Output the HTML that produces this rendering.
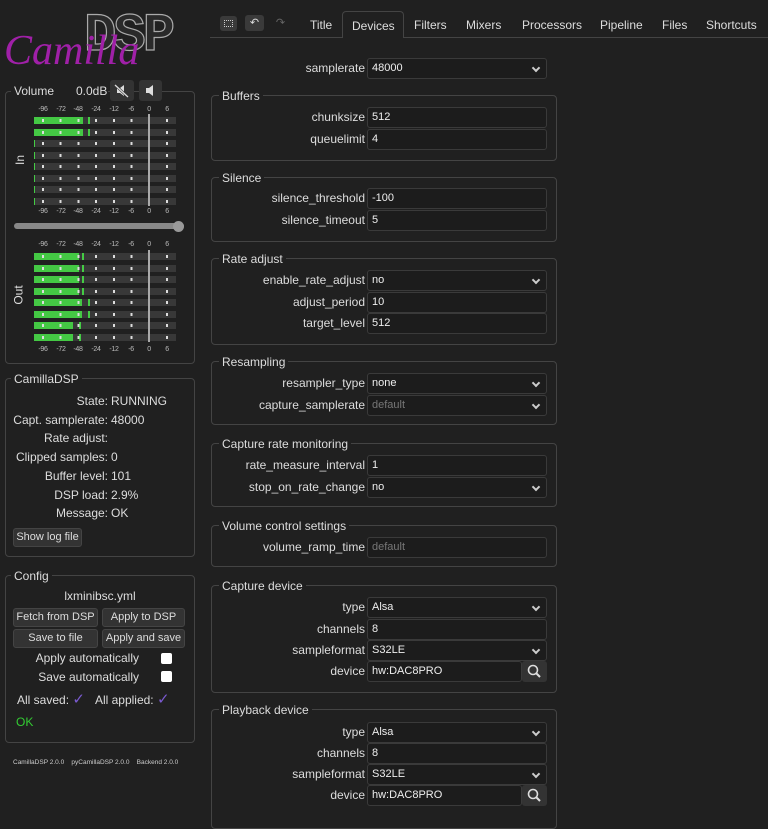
<!DOCTYPE html>
<html><head><meta charset="utf-8"><style>
*{box-sizing:border-box;margin:0;padding:0}
body{width:768px;height:812px;background:#202020;color:#ddd;font-family:"Liberation Sans",sans-serif;font-size:12px;position:relative;overflow:hidden}
.a{position:absolute}
.fs{position:absolute;border:1px solid #444;border-radius:4px}
.lg{position:absolute;background:#202020;padding:0 3px;color:#ddd;font-size:12px;line-height:14px}
.row{position:absolute;left:0;width:346px;height:21px}
.lbl{position:absolute;right:192px;top:3px;text-align:right;white-space:nowrap}
.inp{position:absolute;left:156px;width:180px;height:21px;border:1px solid #3a3a3a;border-radius:3px;background:#1c1c1c;padding:3px 4px;font-size:11px;color:#eee}
.sel::after{content:"";position:absolute;right:7px;top:6px;width:4px;height:4px;border-right:2px solid #ccc;border-bottom:2px solid #ccc;transform:rotate(45deg)}
.dis{color:#777}
.srch{position:absolute;left:311px;width:25px;height:21px;background:#333;border-radius:3px}
.tab{position:absolute;top:18px;font-size:12px;color:#ddd}
.mr{position:absolute;left:34px;width:142px;height:7px;background-size:100% 3px,100% 100%,100% 100%;background-position:0 2px,0 0,0 0;background-repeat:repeat-x,no-repeat,no-repeat}
.sl{position:absolute;width:20px;margin-left:-10px;text-align:center;font-size:7px;color:#bbb;letter-spacing:-0.3px}
.btn{position:absolute;background:#333;border:1px solid #444;border-radius:3px;font-size:11px;text-align:center;line-height:17px;color:#ddd}
.cb{position:absolute;width:11px;height:11px;background:#fff;border-radius:2px}
</style></head><body>

<!-- logo -->
<svg class="a" style="left:0;top:0" width="200" height="80">
<g fill="#2a2a2a" stroke="#aaa" stroke-width="1.2">
<text x="84" y="50" font-family="Liberation Mono" font-weight="bold" font-size="54" letter-spacing="-3">DSP</text>
</g>
<text x="4" y="64" font-family="Liberation Serif" font-style="italic" font-size="42" fill="#a020a8">Camilla</text>
</svg>

<!-- Volume -->
<div class="fs" style="left:5px;top:91px;width:190px;height:273px"></div>
<div class="lg" style="left:11px;top:84px;width:97px">Volume<span style="position:absolute;left:65px">0.0dB</span></div>
<div class="a" style="left:110px;top:80px;width:24px;height:21px;background:#333;border-radius:3px">
<svg width="24" height="21"><path d="M7 8h3l4-3v11l-4-3H7z" fill="#ddd"/><line x1="5" y1="5" x2="18" y2="17" stroke="#333" stroke-width="2.5"/><line x1="5" y1="5" x2="18" y2="17" stroke="#ddd" stroke-width="1.3"/></svg></div>
<div class="a" style="left:139px;top:80px;width:23px;height:21px;background:#333;border-radius:3px">
<svg width="23" height="21"><path d="M7 8h3l4-3v11l-4-3H7z" fill="#ddd"/></svg></div>

<div id="scales"></div>
<div class="a" style="left:15px;top:153px;transform:rotate(-90deg);font-size:12px">In</div>
<div class="a" style="left:14px;top:223px;width:170px;height:6px;background:#888;border-radius:3px"></div>
<div class="a" style="left:173px;top:221px;width:11px;height:11px;background:#999;border-radius:50%"></div>
<div class="a" style="left:9px;top:288px;transform:rotate(-90deg);font-size:12px">Out</div>

<!-- scale labels -->
<div class="a" style="left:0;top:106px">
<div class="sl" style="left:43px">-96</div><div class="sl" style="left:61px">-72</div><div class="sl" style="left:78px">-48</div><div class="sl" style="left:96px">-24</div><div class="sl" style="left:114px">-12</div><div class="sl" style="left:131px">-6</div><div class="sl" style="left:149px">0</div><div class="sl" style="left:167px">6</div></div>
<div class="a" style="left:0;top:208px">
<div class="sl" style="left:43px">-96</div><div class="sl" style="left:61px">-72</div><div class="sl" style="left:78px">-48</div><div class="sl" style="left:96px">-24</div><div class="sl" style="left:114px">-12</div><div class="sl" style="left:131px">-6</div><div class="sl" style="left:149px">0</div><div class="sl" style="left:167px">6</div></div>
<div class="a" style="left:0;top:241px">
<div class="sl" style="left:43px">-96</div><div class="sl" style="left:61px">-72</div><div class="sl" style="left:78px">-48</div><div class="sl" style="left:96px">-24</div><div class="sl" style="left:114px">-12</div><div class="sl" style="left:131px">-6</div><div class="sl" style="left:149px">0</div><div class="sl" style="left:167px">6</div></div>
<div class="a" style="left:0;top:346px">
<div class="sl" style="left:43px">-96</div><div class="sl" style="left:61px">-72</div><div class="sl" style="left:78px">-48</div><div class="sl" style="left:96px">-24</div><div class="sl" style="left:114px">-12</div><div class="sl" style="left:131px">-6</div><div class="sl" style="left:149px">0</div><div class="sl" style="left:167px">6</div></div>

<!-- meter rows -->
<div class="mr" style="top:117px;background-image:repeating-linear-gradient(to right,transparent 0 8px,#ddd 8px 10px,transparent 10px 17.7px),linear-gradient(to right,transparent 54px,#4c4 54px 56px,transparent 56px),linear-gradient(to right,#44c844 49px,#383838 49px)"></div>
<div class="mr" style="top:128.5px;background-image:repeating-linear-gradient(to right,transparent 0 8px,#ddd 8px 10px,transparent 10px 17.7px),linear-gradient(to right,transparent 54px,#4c4 54px 56px,transparent 56px),linear-gradient(to right,#44c844 49px,#383838 49px)"></div>
<div class="mr" style="top:140px;background-image:repeating-linear-gradient(to right,transparent 0 8px,#ddd 8px 10px,transparent 10px 17.7px),linear-gradient(to right,#4c4 1px,transparent 1px),linear-gradient(#383838,#383838)"></div>
<div class="mr" style="top:151.5px;background-image:repeating-linear-gradient(to right,transparent 0 8px,#ddd 8px 10px,transparent 10px 17.7px),linear-gradient(to right,#4c4 1px,transparent 1px),linear-gradient(#383838,#383838)"></div>
<div class="mr" style="top:163px;background-image:repeating-linear-gradient(to right,transparent 0 8px,#ddd 8px 10px,transparent 10px 17.7px),linear-gradient(to right,#4c4 1px,transparent 1px),linear-gradient(#383838,#383838)"></div>
<div class="mr" style="top:174.5px;background-image:repeating-linear-gradient(to right,transparent 0 8px,#ddd 8px 10px,transparent 10px 17.7px),linear-gradient(to right,#4c4 1px,transparent 1px),linear-gradient(#383838,#383838)"></div>
<div class="mr" style="top:186px;background-image:repeating-linear-gradient(to right,transparent 0 8px,#ddd 8px 10px,transparent 10px 17.7px),linear-gradient(to right,#4c4 1px,transparent 1px),linear-gradient(#383838,#383838)"></div>
<div class="mr" style="top:197.5px;background-image:repeating-linear-gradient(to right,transparent 0 8px,#ddd 8px 10px,transparent 10px 17.7px),linear-gradient(to right,#4c4 1px,transparent 1px),linear-gradient(#383838,#383838)"></div>
<div class="a" style="left:148px;top:114px;width:2px;height:92px;background:#aaa"></div>

<div class="mr" style="top:253px;background-image:repeating-linear-gradient(to right,transparent 0 8px,#ddd 8px 10px,transparent 10px 17.7px),linear-gradient(to right,transparent 48px,#4c4 48px 50px,transparent 50px),linear-gradient(to right,#44c844 45px,#383838 45px)"></div>
<div class="mr" style="top:264.5px;background-image:repeating-linear-gradient(to right,transparent 0 8px,#ddd 8px 10px,transparent 10px 17.7px),linear-gradient(to right,transparent 48px,#4c4 48px 50px,transparent 50px),linear-gradient(to right,#44c844 45px,#383838 45px)"></div>
<div class="mr" style="top:276px;background-image:repeating-linear-gradient(to right,transparent 0 8px,#ddd 8px 10px,transparent 10px 17.7px),linear-gradient(to right,transparent 48px,#4c4 48px 50px,transparent 50px),linear-gradient(to right,#44c844 45px,#383838 45px)"></div>
<div class="mr" style="top:287.5px;background-image:repeating-linear-gradient(to right,transparent 0 8px,#ddd 8px 10px,transparent 10px 17.7px),linear-gradient(to right,transparent 48px,#4c4 48px 50px,transparent 50px),linear-gradient(to right,#44c844 45px,#383838 45px)"></div>
<div class="mr" style="top:299px;background-image:repeating-linear-gradient(to right,transparent 0 8px,#ddd 8px 10px,transparent 10px 17.7px),linear-gradient(to right,transparent 54px,#4c4 54px 56px,transparent 56px),linear-gradient(to right,#44c844 48px,#383838 48px)"></div>
<div class="mr" style="top:310.5px;background-image:repeating-linear-gradient(to right,transparent 0 8px,#ddd 8px 10px,transparent 10px 17.7px),linear-gradient(to right,transparent 54px,#4c4 54px 56px,transparent 56px),linear-gradient(to right,#44c844 48px,#383838 48px)"></div>
<div class="mr" style="top:322px;background-image:repeating-linear-gradient(to right,transparent 0 8px,#ddd 8px 10px,transparent 10px 17.7px),linear-gradient(to right,transparent 45px,#4c4 45px 47px,transparent 47px),linear-gradient(to right,#44c844 39px,#383838 39px)"></div>
<div class="mr" style="top:333.5px;background-image:repeating-linear-gradient(to right,transparent 0 8px,#ddd 8px 10px,transparent 10px 17.7px),linear-gradient(to right,transparent 45px,#4c4 45px 47px,transparent 47px),linear-gradient(to right,#44c844 39px,#383838 39px)"></div>
<div class="a" style="left:148px;top:250px;width:2px;height:92px;background:#aaa"></div>

<!-- CamillaDSP -->
<div class="fs" style="left:5px;top:378px;width:190px;height:179px"></div>
<div class="lg" style="left:11px;top:372px">CamillaDSP</div>
<div class="a" style="left:5px;top:392px;width:103px;text-align:right;line-height:18.7px;font-size:12px">State:<br>Capt. samplerate:<br>Rate adjust:<br>Clipped samples:<br>Buffer level:<br>DSP load:<br>Message:</div>
<div class="a" style="left:111px;top:392px;line-height:18.7px;font-size:12px">RUNNING<br>48000<br>&nbsp;<br>0<br>101<br>2.9%<br>OK</div>
<div class="btn" style="left:13px;top:528px;width:69px;height:19px">Show log file</div>

<!-- Config -->
<div class="fs" style="left:5px;top:575px;width:190px;height:168px"></div>
<div class="lg" style="left:11px;top:569px">Config</div>
<div class="a" style="left:5px;top:589px;width:190px;text-align:center">lxminibsc.yml</div>
<div class="btn" style="left:13px;top:608px;width:85px;height:19px">Fetch from DSP</div>
<div class="btn" style="left:102px;top:608px;width:83px;height:19px">Apply to DSP</div>
<div class="btn" style="left:13px;top:629px;width:85px;height:19px">Save to file</div>
<div class="btn" style="left:102px;top:629px;width:83px;height:19px">Apply and save</div>
<div class="a" style="left:0;top:651px;width:139px;text-align:right">Apply automatically</div>
<div class="cb" style="left:161px;top:653px"></div>
<div class="a" style="left:0;top:670px;width:139px;text-align:right">Save automatically</div>
<div class="cb" style="left:161px;top:671px"></div>
<div class="a" style="left:17px;top:690px">All saved: <span style="color:#7a5ad0;font-size:15px">✓</span>&nbsp;&nbsp;&nbsp;All applied: <span style="color:#7a5ad0;font-size:15px">✓</span></div>
<div class="a" style="left:16px;top:715px;color:#3c3;font-size:12px">OK</div>
<div class="a" style="left:13px;top:759px;font-size:6.5px;color:#ccc;white-space:nowrap">CamillaDSP 2.0.0&nbsp;&nbsp;&nbsp;&nbsp;pyCamillaDSP 2.0.0&nbsp;&nbsp;&nbsp;&nbsp;Backend 2.0.0</div>

<!-- top bar -->
<div class="a" style="left:220px;top:16px;width:17px;height:15px;background:#3a3a3a;border-radius:3px"></div>
<div class="a" style="left:224px;top:20px;width:9px;height:7px;border:1px dotted #ccc"></div>
<div class="a" style="left:245px;top:15px;width:19px;height:16px;background:#3a3a3a;border-radius:3px;text-align:center;font-size:11px;line-height:16px">↶</div>
<div class="a" style="left:271px;top:15px;width:19px;height:16px;text-align:center;font-size:11px;line-height:16px;color:#666">↷</div>
<div class="a" style="left:210px;top:37px;width:558px;height:1px;background:#444"></div>
<div class="a" style="left:342px;top:11px;width:62px;height:27px;border:1px solid #444;border-bottom:none;border-radius:4px 4px 0 0;background:#202020"></div>
<div class="tab" style="left:310px">Title</div>
<div class="tab" style="left:352px;top:19px">Devices</div>
<div class="tab" style="left:414px">Filters</div>
<div class="tab" style="left:466px">Mixers</div>
<div class="tab" style="left:522px">Processors</div>
<div class="tab" style="left:600px">Pipeline</div>
<div class="tab" style="left:662px">Files</div>
<div class="tab" style="left:706px">Shortcuts</div>

<!-- right panel -->
<div class="a" style="left:211px;top:0;width:346px;height:812px">
<div class="row" style="top:58px"><div class="lbl">samplerate</div><div class="inp sel">48000</div></div>

<div class="fs" style="left:0;top:95px;width:346px;height:66px"></div><div class="lg" style="left:8px;top:89px">Buffers</div>
<div class="row" style="top:107px"><div class="lbl">chunksize</div><div class="inp">512</div></div>
<div class="row" style="top:129px"><div class="lbl">queuelimit</div><div class="inp">4</div></div>

<div class="fs" style="left:0;top:177px;width:346px;height:65px"></div><div class="lg" style="left:8px;top:171px">Silence</div>
<div class="row" style="top:188px"><div class="lbl">silence_threshold</div><div class="inp">-100</div></div>
<div class="row" style="top:210px"><div class="lbl">silence_timeout</div><div class="inp">5</div></div>

<div class="fs" style="left:0;top:258px;width:346px;height:87px"></div><div class="lg" style="left:8px;top:252px">Rate adjust</div>
<div class="row" style="top:270px"><div class="lbl">enable_rate_adjust</div><div class="inp sel">no</div></div>
<div class="row" style="top:292px"><div class="lbl">adjust_period</div><div class="inp">10</div></div>
<div class="row" style="top:313px"><div class="lbl">target_level</div><div class="inp">512</div></div>

<div class="fs" style="left:0;top:361px;width:346px;height:64px"></div><div class="lg" style="left:8px;top:355px">Resampling</div>
<div class="row" style="top:373px"><div class="lbl">resampler_type</div><div class="inp sel">none</div></div>
<div class="row" style="top:395px"><div class="lbl">capture_samplerate</div><div class="inp sel dis">default</div></div>

<div class="fs" style="left:0;top:443px;width:346px;height:64px"></div><div class="lg" style="left:8px;top:437px">Capture rate monitoring</div>
<div class="row" style="top:455px"><div class="lbl">rate_measure_interval</div><div class="inp">1</div></div>
<div class="row" style="top:477px"><div class="lbl">stop_on_rate_change</div><div class="inp sel">no</div></div>

<div class="fs" style="left:0;top:525px;width:346px;height:42px"></div><div class="lg" style="left:8px;top:519px">Volume control settings</div>
<div class="row" style="top:537px"><div class="lbl">volume_ramp_time</div><div class="inp dis">default</div></div>

<div class="fs" style="left:0;top:585px;width:346px;height:108px"></div><div class="lg" style="left:8px;top:579px">Capture device</div>
<div class="row" style="top:597px"><div class="lbl">type</div><div class="inp sel">Alsa</div></div>
<div class="row" style="top:619px"><div class="lbl">channels</div><div class="inp">8</div></div>
<div class="row" style="top:640px"><div class="lbl">sampleformat</div><div class="inp sel">S32LE</div></div>
<div class="row" style="top:661px"><div class="lbl">device</div><div class="inp" style="width:155px">hw:DAC8PRO</div><div class="srch"><svg width="25" height="21"><circle cx="11" cy="9" r="4.5" fill="none" stroke="#ddd" stroke-width="1.6"/><line x1="14.5" y1="12.5" x2="18" y2="16" stroke="#ddd" stroke-width="2"/></svg></div></div>

<div class="fs" style="left:0;top:709px;width:346px;height:120px"></div><div class="lg" style="left:8px;top:703px">Playback device</div>
<div class="row" style="top:722px"><div class="lbl">type</div><div class="inp sel">Alsa</div></div>
<div class="row" style="top:743px"><div class="lbl">channels</div><div class="inp">8</div></div>
<div class="row" style="top:764px"><div class="lbl">sampleformat</div><div class="inp sel">S32LE</div></div>
<div class="row" style="top:785px"><div class="lbl">device</div><div class="inp" style="width:155px">hw:DAC8PRO</div><div class="srch"><svg width="25" height="21"><circle cx="11" cy="9" r="4.5" fill="none" stroke="#ddd" stroke-width="1.6"/><line x1="14.5" y1="12.5" x2="18" y2="16" stroke="#ddd" stroke-width="2"/></svg></div></div>
</div>
</body></html>
